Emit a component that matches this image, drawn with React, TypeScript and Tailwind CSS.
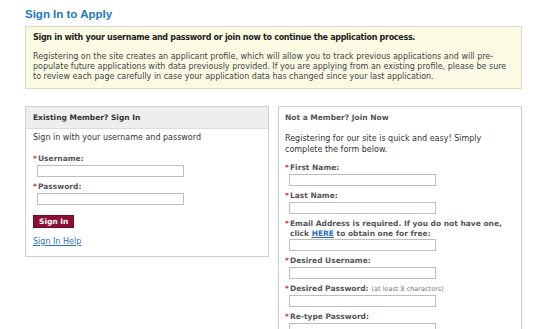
import React from "react";

function Field({ label, extra }: { label: React.ReactNode; extra?: string }) {
  return (
    <div className="mb-[5px]">
      <div className="flex leading-[10px] text-[7.5px] font-bold text-[#555]">
        <span className="text-[#c8312b] w-[5px] shrink-0">*</span>
        <span>
          {label}
          {extra && <span className="font-normal text-[6.5px] text-[#777] ml-[3px]">{extra}</span>}
        </span>
      </div>
      <div className="ml-[4px] mt-[1px] h-[12px] w-[147px] border border-[#bdbdbd] bg-white" />
    </div>
  );
}

export default function App() {
  return (
    <div className="w-[550px] h-[329px] overflow-hidden bg-white pl-[25px] pr-[28px] pt-[7px] font-['DejaVu_Sans',sans-serif] text-[#333]">
      <h1 className="font-['Liberation_Sans',Arial,sans-serif] font-bold text-[11.5px] leading-[14px] text-[#1d78c4]">Sign In to Apply</h1>
      <div className="mt-[5px] border border-[#dcdcc4] bg-[#fbfbe4] px-[7px] pt-[6px] pb-[6px]">
        <p className="text-[8px] leading-[10px] font-bold text-[#222] tracking-[-0.3px]">
          Sign in with your username and password or join now to continue the application process.
        </p>
        <p className="mt-[9px] text-[8px] leading-[10px] text-[#444]">
          Registering on the site creates an applicant profile, which will allow you to track previous applications and will pre-populate future applications with data previously provided. If you are applying from an existing profile, please be sure to review each page carefully in case your application data has changed since your last application.
        </p>
      </div>
      <div className="mt-[17px] flex items-start gap-[9px]">
        <div className="w-[244px] border border-[#cfcfcf]">
          <div className="h-[22px] bg-[#eeeeee] border-b border-[#dddddd] px-[7px] flex items-center text-[7.5px] font-bold text-[#333]">
            Existing Member? Sign In
          </div>
          <div className="px-[7px] pt-[4px] pb-[9px]">
            <p className="text-[8px] leading-[10px] text-[#333] mb-[11px]">Sign in with your username and password</p>
            <Field label="Username:" />
            <Field label="Password:" />
            <button className="mt-[10px] block h-[13px] px-[5px] bg-[#8e0f36] text-white text-[7.5px] font-bold leading-[11px] border border-[#6d0a28]">
              Sign In
            </button>
            <a className="mt-[9px] block text-[8px] leading-[10px] text-[#2a6fb6] underline">Sign In Help</a>
          </div>
        </div>
        <div className="flex-1 border border-[#cfcfcf] px-[6px]">
          <div className="h-[22px] flex items-center text-[7.5px] font-bold text-[#555]">Not a Member? Join Now</div>
          <p className="mt-[5px] text-[8px] leading-[10.5px] text-[#333] mb-[8px]">
            Registering for our site is quick and easy! Simply<br />complete the form below.
          </p>
          <Field label="First Name:" />
          <Field label="Last Name:" />
          <div className="mb-[5px]">
            <div className="flex leading-[9.5px] text-[7.5px] font-bold text-[#555]">
              <span className="text-[#c8312b] w-[5px] shrink-0">*</span>
              <span>
                Email Address is required. If you do not have one,<br />click <a className="text-[#2a6fb6] underline">HERE</a> to obtain one for free:
              </span>
            </div>
            <div className="ml-[4px] mt-[1px] h-[12px] w-[147px] border border-[#bdbdbd] bg-white" />
          </div>
          <Field label="Desired Username:" />
          <Field label="Desired Password:" extra="(at least 8 characters)" />
          <Field label="Re-type Password:" />
        </div>
      </div>
    </div>
  );
}
